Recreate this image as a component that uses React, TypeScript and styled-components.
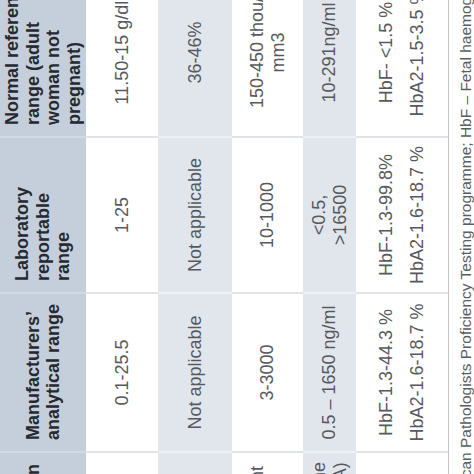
import React from "react";
import styled, { createGlobalStyle } from "styled-components";

const Global = createGlobalStyle`
  html, body { margin: 0; padding: 0; background: #ffffff; }
  body { width: 474px; height: 474px; overflow: hidden; }
`;

const Viewport = styled.div`
  width: 474px;
  height: 474px;
  overflow: hidden;
  background: #ffffff;
  font-family: "Liberation Sans", Arial, Helvetica, sans-serif;
`;

const Rotated = styled.div`
  width: 474px;
  height: 474px;
  transform: rotate(-90deg);
  transform-origin: 50% 50%;
  overflow: hidden;
  display: flex;
  flex-direction: column;
`;

const Table = styled.div`
  flex: none;
  display: grid;
  grid-template-columns: 135px 159px 156px 167px;
  grid-template-rows: 86px 72px 74px 71px 53px 92px;
  margin-left: -112px;
`;

const HeadCell = styled.div<{ $last?: boolean }>`
  box-sizing: border-box;
  background: #c5cfdb;
  color: #262a30;
  font-weight: 700;
  font-size: 18px;
  line-height: 20.5px;
  padding: 0 11px;
  display: flex;
  flex-direction: column;
  justify-content: center;
  align-items: flex-start;
  white-space: nowrap;
  overflow: hidden;
  border-right: ${(p) => (p.$last ? "none" : "2px solid #d3dae3")};
`;

const Cell = styled.div<{ $shade?: boolean; $last?: boolean; $label?: boolean; $spread?: boolean }>`
  box-sizing: border-box;
  background: ${(p) => (p.$shade ? "#e1e6ed" : "#ffffff")};
  color: #56595e;
  font-size: 18px;
  line-height: 20.5px;
  display: flex;
  flex-direction: column;
  justify-content: center;
  align-items: ${(p) => (p.$label ? "flex-start" : "center")};
  padding: ${(p) => (p.$label ? "0 11px" : "0")};
  gap: ${(p) => (p.$spread ? "10.5px" : "0")};
  text-align: center;
  white-space: nowrap;
  overflow: hidden;
  border-right: ${(p) =>
    p.$last ? "none" : p.$shade ? "2px solid #eceff3" : "2px solid #e1e3e6"};
`;

const Line = styled.span`
  display: block;
`;

const Footnote = styled.div`
  flex: none;
  margin-left: -117px;
  border-top: 1px solid #c4c4c4;
  padding-top: 8px;
  font-size: 15.5px;
  line-height: 18px;
  color: #5a5d61;
  white-space: nowrap;
`;

type Row = {
  label: string[];
  shade: boolean;
  spread?: boolean;
  cells: string[][];
};

const headers: string[][] = [
  ["Investigation", "(method)"],
  ["Manufacturers’", "analytical range"],
  ["Laboratory", "reportable", "range"],
  ["Normal reference", "range (adult", "woman not", "pregnant)"],
];

const rows: Row[] = [
  { label: ["Hemoglobin"], shade: false, cells: [["0.1-25.5"], ["1-25"], ["11.50-15 g/dl"]] },
  { label: ["Hematocrit"], shade: true, cells: [["Not applicable"], ["Not applicable"], ["36-46%"]] },
  {
    label: ["Platelet count", "(per mm3)"],
    shade: false,
    cells: [["3-3000"], ["10-1000"], ["150-450 thou/", "mm3"]],
  },
  {
    label: ["Ferritin Roche", "(e411, ECLIA)"],
    shade: true,
    cells: [["0.5 – 1650 ng/ml"], ["<0.5,", ">16500"], ["10-291ng/ml"]],
  },
  {
    label: ["Hb variants", "(HPLC)"],
    shade: false,
    spread: true,
    cells: [
      ["HbF-1.3-44.3 %", "HbA2-1.6-18.7 %"],
      ["HbF-1.3-99.8%", "HbA2-1.6-18.7 %"],
      ["HbF- <1.5 %", "HbA2-1.5-3.5 %"],
    ],
  },
];

export default function App() {
  return (
    <>
      <Global />
      <Viewport>
        <Rotated>
          <Table>
            {headers.map((h, i) => (
              <HeadCell key={"h" + i} $last={i === headers.length - 1}>
                {h.map((t, j) => (
                  <Line key={j}>{t}</Line>
                ))}
              </HeadCell>
            ))}
            {rows.map((r, ri) => (
              <React.Fragment key={"r" + ri}>
                <Cell $shade={r.shade} $label>
                  {r.label.map((t, j) => (
                    <Line key={j}>{t}</Line>
                  ))}
                </Cell>
                {r.cells.map((c, ci) => (
                  <Cell
                    key={ci}
                    $shade={r.shade}
                    $spread={r.spread}
                    $last={ci === r.cells.length - 1}
                  >
                    {c.map((t, j) => (
                      <Line key={j}>{t}</Line>
                    ))}
                  </Cell>
                ))}
              </React.Fragment>
            ))}
          </Table>
          <Footnote>
            College of American Pathologists Proficiency Testing programme; HbF – Fetal haemoglobin; HbA2 – Haemoglobin A2
          </Footnote>
        </Rotated>
      </Viewport>
    </>
  );
}
